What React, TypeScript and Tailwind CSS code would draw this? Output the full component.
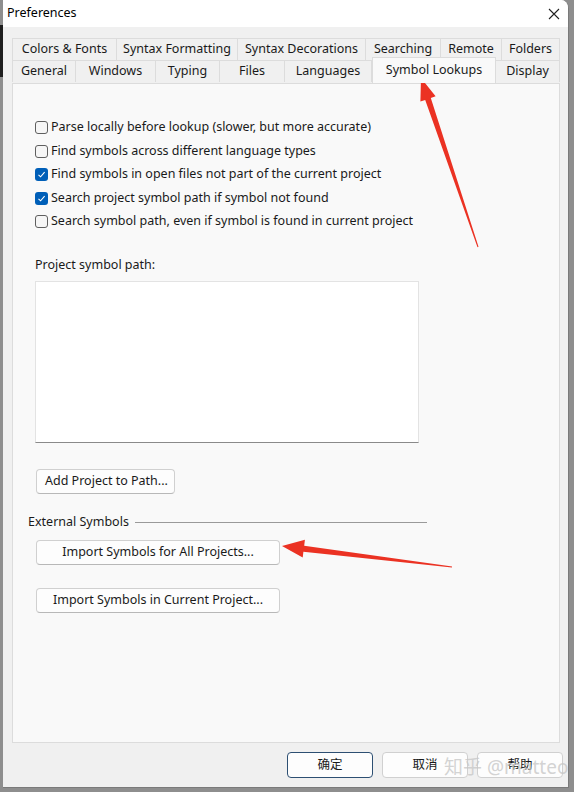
import React from 'react';

const FONT = { fontFamily: '"Noto Sans", "Noto Sans CJK SC", sans-serif' };

const row1 = [
  { label: 'Colors & Fonts', w: 'w-[105px]' },
  { label: 'Syntax Formatting', w: 'w-[121px]' },
  { label: 'Syntax Decorations', w: 'w-[128px]' },
  { label: 'Searching', w: 'w-[75px]' },
  { label: 'Remote', w: 'w-[61px]' },
  { label: 'Folders', w: 'w-[58px]' },
];

const row2 = [
  { label: 'General', w: 'w-[64px]' },
  { label: 'Windows', w: 'w-[80px]' },
  { label: 'Typing', w: 'w-[64px]' },
  { label: 'Files', w: 'w-[65px]' },
  { label: 'Languages', w: 'w-[87px]' },
  { label: 'Symbol Lookups', w: 'w-[124px]', active: true },
  { label: 'Display', w: 'w-[64px]' },
];

const options = [
  { label: 'Parse locally before lookup (slower, but more accurate)', checked: false },
  { label: 'Find symbols across different language types', checked: false },
  { label: 'Find symbols in open files not part of the current project', checked: true },
  { label: 'Search project symbol path if symbol not found', checked: true },
  { label: 'Search symbol path, even if symbol is found in current project', checked: false },
];

function Checkbox({ checked }: { checked: boolean }) {
  if (checked) {
    return (
      <span className="w-[13px] h-[13px] rounded-[3px] bg-[#005fb8] flex items-center justify-center shrink-0">
        <svg width="9" height="9" viewBox="0 0 9 9">
          <path d="M1.5 4.8 L3.6 6.8 L7.6 2.2" fill="none" stroke="#fff" strokeWidth="1.1" />
        </svg>
      </span>
    );
  }
  return <span className="w-[13px] h-[13px] rounded-[3px] border border-[#5f5f5f] bg-[#f6f6f6] shrink-0" />;
}

function Tab({ label, w, active }: { label: string; w: string; active?: boolean }) {
  if (active) {
    return (
      <div
        className={`${w} h-[26px] -mt-[3px] relative z-10 flex items-center justify-center bg-[#f9f9f9] border border-b-0 border-[#dcdcdc] text-[12.5px] text-[#1a1a1a] whitespace-nowrap`}
      >
        {label}
      </div>
    );
  }
  return (
    <div
      className={`${w} h-[22px] flex items-center justify-center bg-[#f0f0f0] border-t border-r border-[#dcdcdc] text-[12.5px] text-[#1a1a1a] whitespace-nowrap first:border-l`}
    >
      {label}
    </div>
  );
}

function Button({ children, className = '' }: { children: React.ReactNode; className?: string }) {
  return (
    <div
      className={`h-[25px] flex items-center bg-[#fdfdfd] border border-[#d0d0d0] border-b-[#b8b8b8] rounded-[4px] text-[12.5px] text-[#1a1a1a] whitespace-nowrap ${className}`}
    >
      {children}
    </div>
  );
}

export default function App() {
  return (
    <div className="w-[574px] h-[792px] relative overflow-hidden bg-[#8e8e8e]" style={FONT}>
      <div className="absolute left-0 top-[25px] w-[3px] h-[52px] bg-[#1e1e1e]" />
      <div className="ml-[3px] w-[566px] h-[788px] flex flex-col bg-[#f0f0f0] border-r border-b border-[#7a7a7a] rounded-tr-[8px] overflow-hidden">
        {/* title bar */}
        <div className="h-[27px] shrink-0 bg-white flex items-center justify-between pl-[4px] pr-[8px]">
          <span className="text-[12.5px] text-black">Preferences</span>
          <svg width="12" height="12" viewBox="0 0 12 12">
            <path d="M1 1 L11 11 M11 1 L1 11" stroke="#222" strokeWidth="1.1" />
          </svg>
        </div>

        <div className="flex flex-col pl-[9px] pt-[11px]">
          <div className="flex">
            {row1.map((t) => (
              <Tab key={t.label} {...t} />
            ))}
          </div>
          <div className="flex">
            {row2.map((t) => (
              <Tab key={t.label} {...t} />
            ))}
          </div>

          {/* tab pane */}
          <div className="w-[548px] h-[660px] bg-[#f9f9f9] border border-[#dcdcdc] flex flex-col text-[12.5px] text-[#1a1a1a]">
            <div className="flex flex-col pl-[22px] pt-[32px]">
              {options.map((o) => (
                <div key={o.label} className="h-[23.5px] flex items-center gap-[3px] whitespace-nowrap">
                  <Checkbox checked={o.checked} />
                  <span>{o.label}</span>
                </div>
              ))}
            </div>

            <div className="pl-[22px] mt-[22px] h-[20px] flex items-center">Project symbol path:</div>
            <div className="ml-[22px] mt-[5px] w-[384px] h-[162px] bg-white border border-[#e3e3e3] border-b-[#8a8a8a]" />

            <Button className="ml-[23px] mt-[26px] w-[139px] px-[8px]">Add Project to Path...</Button>

            <div className="ml-[15px] mt-[20px] w-[399px] h-[18px] flex items-center gap-[6px] whitespace-nowrap">
              <span>External Symbols</span>
              <div className="flex-1 h-px bg-[#9a9a9a]" />
            </div>

            <Button className="ml-[23px] mt-[8px] w-[244px] justify-center">Import Symbols for All Projects...</Button>
            <Button className="ml-[23px] mt-[23px] w-[244px] justify-center">Import Symbols in Current Project...</Button>
          </div>

          {/* dialog buttons */}
          <div className="flex justify-end gap-[9px] pr-[5px] mt-[9px] text-[12.5px] text-[#1a1a1a]">
            <div className="w-[86px] h-[26px] flex items-center justify-center bg-[#fdfdfd] border border-[#2d4f72] rounded-[4px]">确定</div>
            <div className="w-[86px] h-[26px] flex items-center justify-center bg-[#fdfdfd] border border-[#d0d0d0] rounded-[4px]">取消</div>
            <div className="w-[86px] h-[26px] flex items-center justify-center bg-[#fdfdfd] border border-[#d0d0d0] rounded-[4px]">帮助</div>
          </div>
        </div>
      </div>

      {/* watermark */}
      <div className="absolute left-[444px] top-[753px] text-[19px] text-[#c8c8c8]/80 whitespace-nowrap pointer-events-none">
        知乎 @matteo
      </div>

      {/* annotation arrows */}
      <svg className="absolute inset-0 pointer-events-none" width="574" height="792" viewBox="0 0 574 792">
        <polygon
          fill="#eb3223"
          points="421,78 435.6,96.3 430.8,97.9 478.5,246.8 477.5,247.2 425.2,99.9 420.4,101.5"
        />
        <polygon
          fill="#eb3223"
          points="282,546 304.9,539.8 304.2,545.7 452.1,566.5 451.9,567.5 303.4,551.7 302.7,557.6"
        />
      </svg>
    </div>
  );
}
